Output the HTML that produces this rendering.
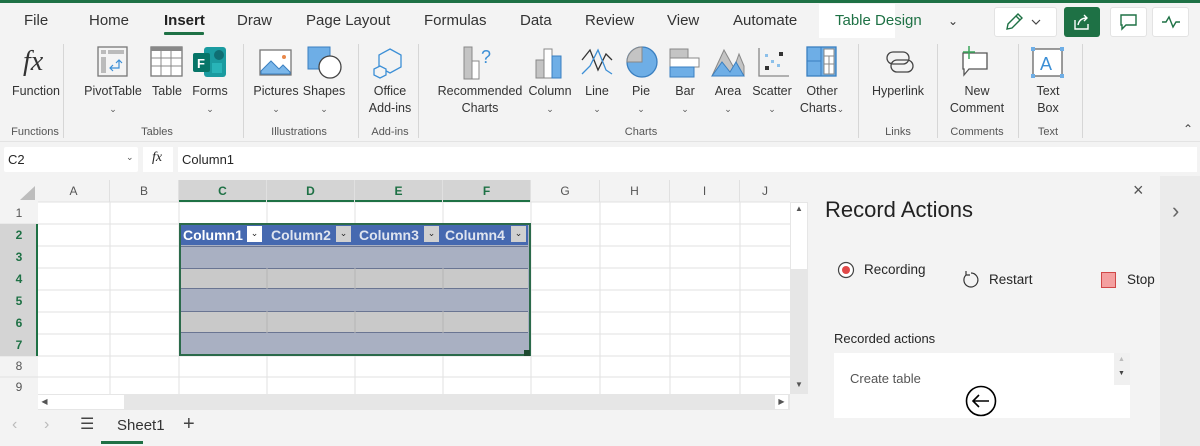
<!DOCTYPE html>
<html><head><meta charset="utf-8"><style>
*{margin:0;padding:0;box-sizing:border-box}
body{width:1200px;height:446px;overflow:hidden;background:#f3f3f3;font-family:"Liberation Sans",sans-serif;color:#262626;position:relative}
.a{position:absolute;white-space:nowrap}
.tab{position:absolute;top:12px;font-size:15px;color:#333}
.lbl{position:absolute;font-size:12.5px;color:#333;text-align:center;line-height:17px;transform:translateX(-50%)}
.grp{position:absolute;top:126px;font-size:11px;color:#555;transform:translateX(-50%)}
.sep{position:absolute;top:44px;width:1px;height:94px;background:#d6d6d6}
.chev{font-size:9px;color:#555}
.ch{position:absolute;top:180px;height:22px;font-size:12px;color:#555;text-align:center;line-height:22px;border-right:1px solid #e0e0e0}
.rh{position:absolute;left:0;width:38px;font-size:12px;color:#555;text-align:center}
svg{position:absolute}
</style></head><body>
<div class="a" style="left:0;top:0;width:1200px;height:3px;background:#1e7145"></div>
<div class="a" style="left:819px;top:4px;width:76px;height:34px;background:#fff"></div>
<div class="tab" style="left:24px">File</div>
<div class="tab" style="left:89px">Home</div>
<div class="tab" style="left:164px;color:#222;font-weight:bold">Insert</div>
<div class="a" style="left:164px;top:32px;width:40px;height:3px;background:#1e7145;border-radius:1px"></div>
<div class="tab" style="left:237px">Draw</div>
<div class="tab" style="left:306px">Page Layout</div>
<div class="tab" style="left:424px">Formulas</div>
<div class="tab" style="left:520px">Data</div>
<div class="tab" style="left:585px">Review</div>
<div class="tab" style="left:667px">View</div>
<div class="tab" style="left:733px">Automate</div>
<div class="tab" style="left:835px;color:#1e7145">Table Design</div>
<div class="tab" style="left:948px;font-size:12px;top:14px">&#8964;</div>
<div class="a" style="left:994px;top:7px;width:63px;height:30px;background:#fff;border:1px solid #e3e3e3;border-radius:3px"></div>
<svg style="left:1004px;top:11px" width="42" height="22"><path d="M3 18 L4 13 L14 3 L18 7 L8 17 Z M12 5 L16 9" fill="none" stroke="#1e7145" stroke-width="1.4"/><path d="M28 9 L32 13 L36 9" fill="none" stroke="#444" stroke-width="1.2"/></svg>
<div class="a" style="left:1064px;top:7px;width:36px;height:30px;background:#1e7145;border-radius:3px"></div>
<svg style="left:1071px;top:11px" width="22" height="22"><path d="M4 9 V18 H17 V13 M7 14 C8 9 11 7 16 7 M13 4 L16 7 L13 10" fill="none" stroke="#fff" stroke-width="1.4"/></svg>
<div class="a" style="left:1110px;top:7px;width:37px;height:30px;background:#fff;border:1px solid #e3e3e3;border-radius:3px"></div>
<svg style="left:1118px;top:12px" width="22" height="20"><path d="M3 3 H18 V13 H8 L4 17 V13 H3 Z" fill="none" stroke="#1e7145" stroke-width="1.4"/></svg>
<div class="a" style="left:1152px;top:7px;width:37px;height:30px;background:#fff;border:1px solid #e3e3e3;border-radius:3px"></div>
<svg style="left:1160px;top:12px" width="22" height="20"><path d="M2 10 H6 L9 5 L13 15 L16 10 H20" fill="none" stroke="#1e7145" stroke-width="1.4"/></svg>

<div class="a" style="left:23px;top:46px;font-family:'Liberation Serif',serif;font-style:italic;font-size:28px;color:#333">fx</div>
<svg style="left:97px;top:46px" width="32" height="32"><rect x="1" y="1" width="29" height="29" fill="#f4f4f4" stroke="#777" stroke-width="1.3"/><rect x="4" y="4" width="5" height="4" fill="#bbb"/><rect x="11" y="4" width="16" height="4" fill="#bbb"/><rect x="4" y="11" width="5" height="16" fill="#bbb"/><path d="M13 22 H22 V14 M19 17 L22 14 L25 17 M16 19 L13 22 L16 25" fill="none" stroke="#3c8fd6" stroke-width="1.2"/></svg>
<svg style="left:150px;top:46px" width="34" height="32"><rect x="1" y="1" width="31" height="29" fill="#fff" stroke="#777" stroke-width="1.3"/><rect x="1" y="1" width="31" height="4" fill="#888"/><path d="M1 12 H32 M1 20 H32 M11 5 V30 M21 5 V30" stroke="#888"/></svg>
<svg style="left:192px;top:45px" width="36" height="34"><rect x="12" y="2" width="22" height="30" rx="3" fill="#1a9ba0"/><circle cx="27" cy="10" r="5" fill="#0f6e73"/><rect x="20" y="18" width="10" height="10" fill="#28b4b8"/><rect x="1" y="8" width="17" height="19" rx="2" fill="#077568"/><text x="5" y="23" font-size="13" font-weight="bold" fill="#fff" font-family="Liberation Sans">F</text></svg>
<svg style="left:259px;top:49px" width="34" height="28"><rect x="1" y="1" width="31" height="25" fill="#fff" stroke="#777" stroke-width="1.3"/><path d="M2 22 L12 12 L20 20 L24 16 L31 23 V25 H2Z" fill="#7bb7ea" stroke="#3a7fc0"/><circle cx="25" cy="8" r="2" fill="#e8884a"/></svg>
<svg style="left:306px;top:45px" width="38" height="36"><rect x="2" y="2" width="22" height="22" fill="#6eaee6" stroke="#3a7fc0"/><circle cx="24" cy="22" r="11" fill="#fff" stroke="#444" stroke-width="1.3"/></svg>
<svg style="left:372px;top:47px" width="36" height="34"><path d="M18 2 L29 8 V20 L18 26 L7 20 V8 Z" fill="none" stroke="#3c8fd6" stroke-width="1.3"/><path d="M8 19 L14 22 V28 L8 31 L2 28 V22 Z" fill="#f4f4f4" stroke="#3c8fd6" stroke-width="1.3"/></svg>
<svg style="left:462px;top:45px" width="34" height="36"><rect x="2" y="2" width="8" height="32" fill="#c4c4c4" stroke="#888"/><rect x="10" y="16" width="7" height="18" fill="#fff" stroke="#888"/><text x="19" y="18" font-size="18" fill="#3c8fd6" font-family="Liberation Sans">?</text></svg>
<svg style="left:534px;top:46px" width="32" height="34"><rect x="2" y="14" width="8" height="18" fill="#c4c4c4" stroke="#888"/><rect x="10" y="3" width="8" height="29" fill="#fff" stroke="#888"/><rect x="18" y="10" width="9" height="22" fill="#6eaee6" stroke="#3a7fc0"/></svg>
<svg style="left:580px;top:46px" width="34" height="32"><path d="M2 14 L10 4 L18 24 L26 8 L32 14" fill="none" stroke="#333" stroke-width="1.3"/><path d="M2 28 L10 20 L18 4 L26 24 L32 28" fill="none" stroke="#3c8fd6" stroke-width="1.3"/></svg>
<svg style="left:625px;top:45px" width="34" height="34"><circle cx="17" cy="17" r="15" fill="#6eaee6" stroke="#3a7fc0" stroke-width="1.3"/><path d="M17 17 V2 A15 15 0 0 0 2 17 Z" fill="#c4c4c4" stroke="#888"/></svg>
<svg style="left:668px;top:47px" width="34" height="32"><rect x="2" y="2" width="18" height="9" fill="#c4c4c4" stroke="#888"/><rect x="2" y="11" width="29" height="9" fill="#fff" stroke="#888"/><rect x="2" y="20" width="24" height="10" fill="#6eaee6" stroke="#3a7fc0"/></svg>
<svg style="left:710px;top:46px" width="36" height="32"><path d="M2 30 L14 4 L24 22 L29 8 L34 20 V30 Z" fill="#c4c4c4" stroke="#888"/><path d="M2 30 L12 16 L20 26 L26 16 L34 30 Z" fill="#6eaee6" stroke="#3a7fc0"/></svg>
<svg style="left:757px;top:46px" width="34" height="32"><path d="M2 2 V30 H32" fill="none" stroke="#888" stroke-width="1.3"/><rect x="8" y="20" width="4" height="4" fill="#333"/><rect x="14" y="14" width="3" height="3" fill="#8cc0ea"/><rect x="8" y="8" width="3" height="3" fill="#8cc0ea"/><rect x="20" y="18" width="3" height="3" fill="#8cc0ea"/><rect x="22" y="6" width="4" height="4" fill="#333"/></svg>
<svg style="left:806px;top:46px" width="34" height="32"><rect x="1" y="1" width="29" height="29" fill="#6eaee6" stroke="#3a7fc0" stroke-width="1.3"/><path d="M15 1 V30 M1 15 H15" stroke="#3a7fc0"/><rect x="18" y="3" width="10" height="25" fill="#fff" stroke="#888"/><path d="M18 10 H28 M18 18 H28 M23 10 V28" stroke="#888"/></svg>
<svg style="left:883px;top:48px" width="34" height="30"><path d="M10 4 H20 A6 6 0 0 1 20 16 H16 M14 12 H24 A6 6 0 0 1 24 24 H14 A6 6 0 0 1 14 12" fill="none" stroke="#444" stroke-width="1.3"/><path d="M16 16 H10 A6 6 0 0 1 10 4" fill="none" stroke="#444" stroke-width="1.3"/></svg>
<svg style="left:955px;top:45px" width="40" height="34"><path d="M8 8 H32 V24 H14 L9 30 V24 H8 Z" fill="#fff" stroke="#555" stroke-width="1.3"/><path d="M14 1 V14 M8 7 H20" stroke="#3aa55b" stroke-width="1.5"/></svg>
<svg style="left:1030px;top:46px" width="36" height="32"><rect x="3" y="3" width="29" height="27" fill="#fff" stroke="#666" stroke-width="1.3"/><rect x="1" y="1" width="4" height="4" fill="#6eaee6"/><rect x="30" y="1" width="4" height="4" fill="#6eaee6"/><rect x="1" y="28" width="4" height="4" fill="#6eaee6"/><rect x="30" y="28" width="4" height="4" fill="#6eaee6"/><text x="10" y="24" font-size="18" fill="#3c8fd6" font-family="Liberation Sans">A</text></svg>

<div class="lbl" style="left:36px;top:83px">Function</div>
<div class="lbl" style="left:113px;top:83px">PivotTable<br><span class="chev">&#8964;</span></div>
<div class="lbl" style="left:167px;top:83px">Table</div>
<div class="lbl" style="left:210px;top:83px">Forms<br><span class="chev">&#8964;</span></div>
<div class="lbl" style="left:276px;top:83px">Pictures<br><span class="chev">&#8964;</span></div>
<div class="lbl" style="left:324px;top:83px">Shapes<br><span class="chev">&#8964;</span></div>
<div class="lbl" style="left:390px;top:83px">Office<br>Add-ins</div>
<div class="lbl" style="left:480px;top:83px">Recommended<br>Charts</div>
<div class="lbl" style="left:550px;top:83px">Column<br><span class="chev">&#8964;</span></div>
<div class="lbl" style="left:597px;top:83px">Line<br><span class="chev">&#8964;</span></div>
<div class="lbl" style="left:641px;top:83px">Pie<br><span class="chev">&#8964;</span></div>
<div class="lbl" style="left:685px;top:83px">Bar<br><span class="chev">&#8964;</span></div>
<div class="lbl" style="left:728px;top:83px">Area<br><span class="chev">&#8964;</span></div>
<div class="lbl" style="left:772px;top:83px">Scatter<br><span class="chev">&#8964;</span></div>
<div class="lbl" style="left:822px;top:83px">Other<br>Charts<span class="chev">&#8964;</span></div>
<div class="lbl" style="left:898px;top:83px">Hyperlink</div>
<div class="lbl" style="left:977px;top:83px">New<br>Comment</div>
<div class="lbl" style="left:1048px;top:83px">Text<br>Box</div>
<div class="grp" style="left:35px">Functions</div>
<div class="grp" style="left:157px">Tables</div>
<div class="grp" style="left:299px">Illustrations</div>
<div class="grp" style="left:390px">Add-ins</div>
<div class="grp" style="left:641px">Charts</div>
<div class="grp" style="left:898px">Links</div>
<div class="grp" style="left:977px">Comments</div>
<div class="grp" style="left:1048px">Text</div>
<div class="sep" style="left:63px"></div><div class="sep" style="left:243px"></div><div class="sep" style="left:358px"></div><div class="sep" style="left:418px"></div><div class="sep" style="left:858px"></div><div class="sep" style="left:937px"></div><div class="sep" style="left:1018px"></div><div class="sep" style="left:1082px"></div>
<div class="a" style="left:1183px;top:122px;font-size:12px;color:#444">&#8963;</div>
<div class="a" style="left:0;top:141px;width:1200px;height:1px;background:#e3e3e3"></div>

<div class="a" style="left:4px;top:147px;width:134px;height:25px;background:#fff;border-radius:2px"></div>
<div class="a" style="left:8px;top:152px;font-size:13px">C2</div>
<div class="a" style="left:126px;top:152px;font-size:9px;color:#555">&#8964;</div>
<div class="a" style="left:143px;top:147px;width:30px;height:25px;background:#fff"></div>
<div class="a" style="left:152px;top:150px;font-family:'Liberation Serif',serif;font-style:italic;font-size:14px">fx</div>
<div class="a" style="left:178px;top:147px;width:1019px;height:25px;background:#fff"></div>
<div class="a" style="left:182px;top:152px;font-size:13px">Column1</div>

<div class="a" style="left:38px;top:202px;width:752px;height:192px;background:#fff"></div>
<svg style="left:0;top:180px" width="810" height="232">
<g stroke="#e2e2e2" stroke-width="1">
<path d="M110 22 V214 M179 22 V214 M267 22 V214 M355 22 V214 M443 22 V214 M531 22 V214 M600 22 V214 M670 22 V214 M740 22 V214"/>
<path d="M0 44 H790 M0 66 H790 M0 88 H790 M0 110 H790 M0 132 H790 M0 154 H790 M0 176 H790 M0 197 H790 M38 22 H790"/>
</g>
<path d="M20 20 L35 6 V20 Z" fill="#bdbdbd"/>
</svg>
<div class="a" style="left:179px;top:180px;width:352px;height:22px;background:#d4d4d4;border-bottom:2px solid #1e7145"></div>
<div class="a" style="left:0;top:224px;width:38px;height:132px;background:#d4d4d4;border-right:2px solid #1e7145"></div>
<div class="ch" style="left:38px;width:72px">A</div>
<div class="ch" style="left:110px;width:69px">B</div>
<div class="ch" style="left:179px;width:88px;font-weight:bold;color:#1e7145">C</div>
<div class="ch" style="left:267px;width:88px;font-weight:bold;color:#1e7145">D</div>
<div class="ch" style="left:355px;width:88px;font-weight:bold;color:#1e7145">E</div>
<div class="ch" style="left:443px;width:88px;font-weight:bold;color:#1e7145">F</div>
<div class="ch" style="left:531px;width:69px">G</div>
<div class="ch" style="left:600px;width:70px">H</div>
<div class="ch" style="left:670px;width:70px">I</div>
<div class="ch" style="left:740px;width:50px;border:0">J</div>
<div class="rh" style="top:206px">1</div>
<div class="rh" style="top:228px;font-weight:bold;color:#1e7145">2</div>
<div class="rh" style="top:250px;font-weight:bold;color:#1e7145">3</div>
<div class="rh" style="top:272px;font-weight:bold;color:#1e7145">4</div>
<div class="rh" style="top:294px;font-weight:bold;color:#1e7145">5</div>
<div class="rh" style="top:316px;font-weight:bold;color:#1e7145">6</div>
<div class="rh" style="top:338px;font-weight:bold;color:#1e7145">7</div>
<div class="rh" style="top:359px">8</div>
<div class="rh" style="top:380px">9</div>

<div class="a" style="left:179px;top:223px;width:352px;height:133px;border:2px solid #2b6a4a;background:#a9b0c2"></div>
<div class="a" style="left:181px;top:225px;width:347px;height:20px;background:#4669b0"></div>
<div class="a" style="left:181px;top:268px;width:347px;height:21px;background:#c9c9c9;border-top:1px solid #6a7592;border-bottom:1px solid #6a7592"></div>
<div class="a" style="left:181px;top:311px;width:347px;height:22px;background:#c9c9c9;border-top:1px solid #6a7592;border-bottom:1px solid #6a7592"></div>
<div class="a" style="left:181px;top:246px;width:347px;height:1px;background:#6a7592"></div>
<svg style="left:181px;top:268px" width="350" height="66"><path d="M86 0 V21 M174 0 V21 M262 0 V21 M86 43 V65 M174 43 V65 M262 43 V65" stroke="#b5b5b5"/></svg>
<div class="a" style="left:183px;top:227px;font-size:14px;font-weight:bold;color:#fff">Column1</div>
<div class="a" style="left:271px;top:227px;font-size:14px;font-weight:bold;color:#dfe4ef">Column2</div>
<div class="a" style="left:359px;top:227px;font-size:14px;font-weight:bold;color:#dfe4ef">Column3</div>
<div class="a" style="left:445px;top:227px;font-size:14px;font-weight:bold;color:#dfe4ef">Column4</div>
<div class="a" style="left:247px;top:226px;width:15px;height:16px;background:#fff;font-size:9px;text-align:center;line-height:14px">&#8964;</div>
<div class="a" style="left:336px;top:226px;width:15px;height:16px;background:#d0d0d0;font-size:9px;text-align:center;line-height:14px">&#8964;</div>
<div class="a" style="left:424px;top:226px;width:15px;height:16px;background:#d0d0d0;font-size:9px;text-align:center;line-height:14px">&#8964;</div>
<div class="a" style="left:511px;top:226px;width:15px;height:16px;background:#d0d0d0;font-size:9px;text-align:center;line-height:14px">&#8964;</div>
<div class="a" style="left:524px;top:350px;width:6px;height:6px;background:#1e4a30"></div>

<div class="a" style="left:790px;top:202px;width:18px;height:192px;background:#e6e6e6"></div>
<div class="a" style="left:791px;top:203px;width:16px;height:66px;background:#fff"></div>
<div class="a" style="left:795px;top:204px;font-size:8px;color:#555">&#9650;</div>
<div class="a" style="left:795px;top:380px;font-size:8px;color:#555">&#9660;</div>
<div class="a" style="left:38px;top:394px;width:752px;height:16px;background:#e6e6e6"></div>
<div class="a" style="left:51px;top:395px;width:73px;height:14px;background:#fff"></div>
<div class="a" style="left:38px;top:395px;width:13px;height:14px;background:#fff;font-size:8px;color:#555;text-align:center;line-height:14px">&#9664;</div>
<div class="a" style="left:775px;top:395px;width:13px;height:14px;background:#fff;font-size:8px;color:#555;text-align:center;line-height:14px">&#9654;</div>

<div class="a" style="left:12px;top:416px;font-size:16px;color:#bbb">&#8249;</div>
<div class="a" style="left:44px;top:416px;font-size:16px;color:#bbb">&#8250;</div>
<div class="a" style="left:80px;top:414px;font-size:16px;color:#444">&#9776;</div>
<div class="a" style="left:117px;top:417px;font-size:15px;color:#333">Sheet1</div>
<div class="a" style="left:101px;top:441px;width:42px;height:3px;background:#1e7145"></div>
<div class="a" style="left:183px;top:413px;font-size:20px;color:#444">+</div>

<div class="a" style="left:1160px;top:176px;width:40px;height:270px;background:#ebebeb"></div>
<div class="a" style="left:1172px;top:198px;font-size:22px;color:#666">&#8250;</div>
<div class="a" style="left:1133px;top:180px;font-size:18px;color:#555">&#215;</div>
<div class="a" style="left:825px;top:197px;font-size:22px;color:#222">Record Actions</div>
<svg style="left:837px;top:261px" width="20" height="20"><circle cx="9" cy="9" r="7.5" fill="#fff" stroke="#444" stroke-width="1.2"/><circle cx="9" cy="9" r="4" fill="#e04848"/></svg>
<div class="a" style="left:864px;top:262px;font-size:13.5px">Recording</div>
<svg style="left:962px;top:270px" width="20" height="20"><path d="M4 5 A7 7 0 1 0 9 3 M4 1 V5 H8" fill="none" stroke="#333" stroke-width="1.2"/></svg>
<div class="a" style="left:989px;top:272px;font-size:13.5px">Restart</div>
<div class="a" style="left:1101px;top:272px;width:15px;height:16px;background:#f4a0a0;border:1px solid #d04848"></div>
<div class="a" style="left:1127px;top:272px;font-size:13.5px">Stop</div>
<div class="a" style="left:834px;top:331px;font-size:13px">Recorded actions</div>
<div class="a" style="left:834px;top:353px;width:296px;height:65px;background:#fff"></div>
<div class="a" style="left:1114px;top:353px;width:16px;height:32px;background:#f0f0f0"></div>
<div class="a" style="left:1118px;top:356px;font-size:7px;color:#bbb">&#9650;</div>
<div class="a" style="left:1118px;top:370px;font-size:7px;color:#444">&#9660;</div>
<div class="a" style="left:850px;top:371px;font-size:13px;color:#555">Create table</div>
<svg style="left:964px;top:385px" width="34" height="34"><circle cx="17" cy="16" r="14.5" fill="#fff" stroke="#000" stroke-width="1.6"/><path d="M9 16 H25 M15 10 L9 16 L15 22" fill="none" stroke="#000" stroke-width="1.6"/></svg>
</body></html>
